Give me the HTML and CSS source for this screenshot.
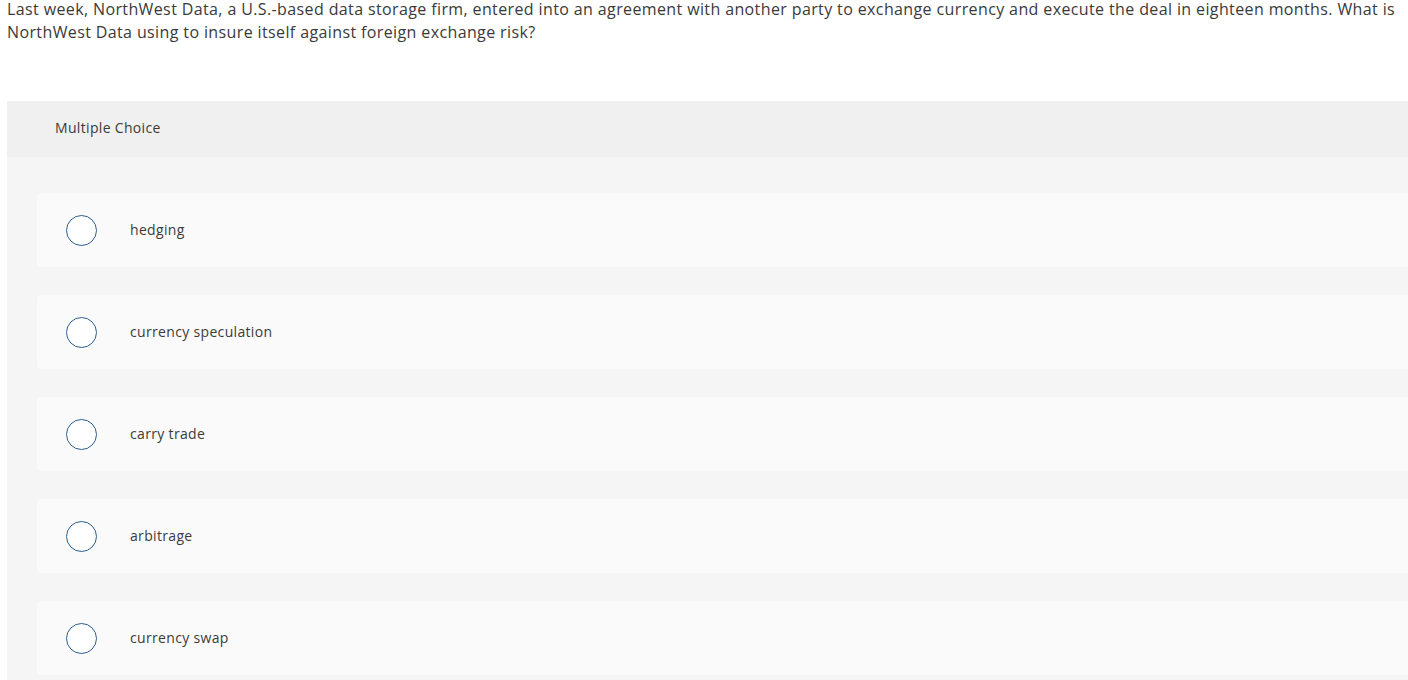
FILE: index.html
```html
<!DOCTYPE html>
<html>
<head>
<meta charset="utf-8">
<link rel="stylesheet" href="styles.css">
</head>
<body>
<div class="page">
  <p class="question">Last week, NorthWest Data, a U.S.-based data storage firm, entered into an agreement with another party to exchange currency and execute the deal in eighteen months. What is NorthWest Data using to insure itself against foreign exchange risk?</p>
  <section class="panel">
    <div class="panel-header">Multiple Choice</div>
    <div class="choices">
      <label class="choice"><span class="radio"></span><span class="choice-text">hedging</span></label>
      <label class="choice"><span class="radio"></span><span class="choice-text">currency speculation</span></label>
      <label class="choice"><span class="radio"></span><span class="choice-text">carry trade</span></label>
      <label class="choice"><span class="radio"></span><span class="choice-text">arbitrage</span></label>
      <label class="choice"><span class="radio"></span><span class="choice-text">currency swap</span></label>
    </div>
  </section>
</div>
</body>
</html>
```
FILE: styles.css
```css
html, body {
  margin: 0;
  padding: 0;
  background: #fff;
  overflow: hidden;
}
.page {
  padding: 0 0 0 7px;
  font-family: "Open Sans", Lato, sans-serif;
  color: #3a3a3a;
  letter-spacing: 0.33px;
}
.question {
  margin: -2px 0 0 0;
  font-size: 16px;
  line-height: 23px;
  letter-spacing: 0.38px;
  width: 1401px;
}
.panel {
  margin-top: 57px;
  margin-right: -20px;
  background: #f5f5f5;
}
.panel-header {
  background: #f0f0f0;
  height: 56px;
  display: flex;
  align-items: center;
  padding-left: 48px;
  padding-bottom: 3px;
  box-sizing: border-box;
  font-size: 14px;
  color: #3a3a3a;
}
.choices {
  display: flex;
  flex-direction: column;
  gap: 28px;
  padding: 36px 0 8px 30px;
}
.choice {
  display: flex;
  align-items: center;
  height: 74px;
  background: #fafafa;
  border-radius: 4px 0 0 4px;
  padding-left: 29px;
}
.radio {
  width: 29px;
  height: 29px;
  border: 1px solid #2b5f92;
  border-radius: 50%;
  background: #fff;
  flex: none;
}
.choice-text {
  margin-left: 33px;
  margin-bottom: 2px;
  font-size: 14px;
  color: #3a3a3a;
}
```
